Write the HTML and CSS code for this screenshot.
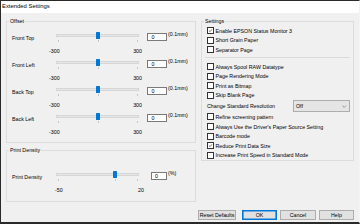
FILE: index.html
```html
<!DOCTYPE html>
<html>
<head>
<meta charset="utf-8">
<link rel="stylesheet" href="styles.css">
</head>
<body>
<div class="window">
  <div class="titlebar">Extended Settings</div>
  <div class="main">
    <div class="leftcol">
      <div class="group offset">
        <span class="legend">Offset</span>
        <div class="srow">
          <div class="lbl">Front Top</div>
          <div class="slider">
            <div class="track"></div>
            <div class="thumb" style="left:39.5px"></div>
            <div class="ticks"><i class="tk start"></i><i class="tk" style="left:41.5px"></i><i class="tk end"></i></div>
            <div class="scale wide"><span>-300</span><span>300</span></div>
          </div>
          <div class="num">0</div>
          <div class="unit">(0.1mm)</div>
        </div>
        <div class="srow">
          <div class="lbl">Front Left</div>
          <div class="slider">
            <div class="track"></div>
            <div class="thumb" style="left:39.5px"></div>
            <div class="ticks"><i class="tk start"></i><i class="tk" style="left:41.5px"></i><i class="tk end"></i></div>
            <div class="scale wide"><span>-300</span><span>300</span></div>
          </div>
          <div class="num">0</div>
          <div class="unit">(0.1mm)</div>
        </div>
        <div class="srow">
          <div class="lbl">Back Top</div>
          <div class="slider">
            <div class="track"></div>
            <div class="thumb" style="left:39.5px"></div>
            <div class="ticks"><i class="tk start"></i><i class="tk" style="left:41.5px"></i><i class="tk end"></i></div>
            <div class="scale wide"><span>-300</span><span>300</span></div>
          </div>
          <div class="num">0</div>
          <div class="unit">(0.1mm)</div>
        </div>
        <div class="srow">
          <div class="lbl">Back Left</div>
          <div class="slider">
            <div class="track"></div>
            <div class="thumb" style="left:39.5px"></div>
            <div class="ticks"><i class="tk start"></i><i class="tk" style="left:41.5px"></i><i class="tk end"></i></div>
            <div class="scale wide"><span>-300</span><span>300</span></div>
          </div>
          <div class="num">0</div>
          <div class="unit">(0.1mm)</div>
        </div>
      </div>
      <div class="group density">
        <span class="legend">Print Density</span>
        <div class="srow">
          <div class="lbl">Print Density</div>
          <div class="slider">
            <div class="track"></div>
            <div class="thumb" style="left:57.3px"></div>
            <div class="ticks"><i class="tk start"></i><i class="tk" style="left:59.3px"></i><i class="tk end"></i></div>
            <div class="scale narrow"><span>-50</span><span>20</span></div>
          </div>
          <div class="num small">0</div>
          <div class="unit">(%)</div>
        </div>
      </div>
    </div>
    <div class="group settings">
      <span class="legend">Settings</span>
      <div class="chk"><span class="box on"><svg viewBox="0 0 7 7"><path d="M1.3 3.6 L2.9 5.1 L5.7 1.8"/></svg></span>Enable EPSON Status Monitor 3</div>
      <div class="chk"><span class="box"></span>Short Grain Paper</div>
      <div class="chk"><span class="box"></span>Separator Page</div>
      <div class="sep"></div>
      <div class="chk"><span class="box"></span>Always Spool RAW Datatype</div>
      <div class="chk"><span class="box"></span>Page Rendering Mode</div>
      <div class="chk"><span class="box"></span>Print as Bitmap</div>
      <div class="chk"><span class="box"></span>Skip Blank Page</div>
      <div class="selrow">
        <span class="sellbl">Change Standard Resolution</span>
        <div class="select"><span>Off</span><svg viewBox="0 0 5 3"><path d="M0.5 0.5 L2.5 2.5 L4.5 0.5"/></svg></div>
      </div>
      <div class="chk"><span class="box"></span>Refine screening pattern</div>
      <div class="chk"><span class="box"></span>Always Use the Driver's Paper Source Setting</div>
      <div class="chk"><span class="box"></span>Barcode mode</div>
      <div class="chk"><span class="box on"><svg viewBox="0 0 7 7"><path d="M1.3 3.6 L2.9 5.1 L5.7 1.8"/></svg></span>Reduce Print Data Size</div>
      <div class="chk"><span class="box"></span>Increase Print Speed in Standard Mode</div>
    </div>
  </div>
  <div class="buttons">
    <div class="btn reset">Reset Defaults</div>
    <div class="btn ok">OK</div>
    <div class="btn cancel">Cancel</div>
    <div class="btn">Help</div>
  </div>
</div>
</body>
</html>
```

FILE: styles.css
```css
* { box-sizing: border-box; }
body {
  margin: 0;
  background: #ffffff;
  font-family: "Liberation Sans", Arial, sans-serif;
  font-size: 5.3px;
  color: #000;
}
.window {
  width: 360px;
  height: 224px;
  border-top: 1px solid #2a2a2a;
  border-left: 1px solid #2a2a2a;
  border-bottom: 2px solid #2a2a2a;
  border-right: 1px solid #f4f4f4;
  background: #f0f0f0;
  display: flex;
  flex-direction: column;
}
.titlebar {
  height: 12px;
  background: #fff;
  font-size: 5.9px;
  line-height: 11px;
  padding-left: 1px;
  flex: none;
}
.main {
  display: flex;
  gap: 5px;
  padding: 8px 0 0 5px;
}
.leftcol {
  width: 190px;
  display: flex;
  flex-direction: column;
  gap: 7px;
}
.group {
  position: relative;
  border: 1px solid #dcdcdc;
}
.legend {
  position: absolute;
  top: -4px;
  left: 2px;
  padding: 0 1px;
  background: #f0f0f0;
  line-height: 6px;
}
.offset { height: 122px; padding: 8px 0 0 5px; }
.density { height: 52px; padding: 18px 0 0 5px; }
.settings { width: 153px; height: 140px; padding: 4px 0 0 5px; }

.srow {
  display: flex;
  align-items: flex-start;
  height: 27px;
}
.lbl {
  width: 44px;
  padding-top: 4.7px;
  line-height: 6px;
  white-space: nowrap;
}
.slider {
  position: relative;
  width: 84px;
  height: 27px;
}
.track {
  margin-top: 3.5px;
  width: 83px;
  height: 3px;
  background: #e7e7e7;
  border: 1px solid #d6d6d6;
}
.thumb {
  position: absolute;
  top: 1.5px;
  width: 4px;
  height: 7px;
  background: #0078d7;
  border-radius: 0.5px;
}
.ticks {
  position: relative;
  margin-top: 3.5px;
  height: 2px;
}
.tk {
  position: absolute;
  top: 0;
  width: 1px;
  height: 2px;
  background: #c6c6c6;
}
.tk.start { left: 2px; }
.tk.end { left: 81px; }
.scale {
  display: flex;
  justify-content: space-between;
  margin-top: 5.7px;
  line-height: 6px;
}
.scale.wide { margin-left: -7px; margin-right: -2px; }
.scale.narrow { margin-left: -1px; margin-right: -4px; }
.num {
  margin-left: 7px;
  margin-top: 2.5px;
  width: 20px;
  height: 8.5px;
  background: #fff;
  border: 1px solid #7a7a7a;
  line-height: 6.5px;
  padding-left: 3.5px;
}
.num.small {
  margin-left: 10.5px;
  width: 16.5px;
}
.unit {
  margin-left: 1px;
  margin-top: 1.2px;
  line-height: 6px;
  white-space: nowrap;
}

.chk {
  display: flex;
  align-items: center;
  height: 9.6px;
  white-space: nowrap;
}
.box {
  width: 7px;
  height: 7px;
  border: 1px solid #333;
  background: #fff;
  margin-right: 1.5px;
  flex: none;
  display: flex;
}
.box svg { width: 5px; height: 5px; }
.box svg path { fill: none; stroke: #333; stroke-width: 0.9; }
.sep {
  height: 1px;
  background: #dadada;
  margin: 2.5px 3px 3.5px -2px;
}
.selrow {
  display: flex;
  align-items: center;
  height: 12px;
  white-space: nowrap;
}
.sellbl { flex: 1; }
.select {
  width: 57px;
  height: 12.5px;
  margin-right: 3px;
  background: #e5e5e5;
  border: 1px solid #adadad;
  display: flex;
  align-items: center;
  justify-content: space-between;
  padding: 0 2.5px 0 2px;
}
.select svg { width: 4.5px; height: 3px; }
.select svg path { fill: none; stroke: #555; stroke-width: 0.6; }

.buttons {
  margin-top: auto;
  margin-bottom: 2px;
  display: flex;
  justify-content: flex-end;
  padding-right: 5px;
}
.btn {
  width: 35px;
  height: 10px;
  margin-left: 3px;
  background: #e1e1e1;
  border: 1px solid #adadad;
  display: flex;
  align-items: center;
  justify-content: center;
  white-space: nowrap;
  line-height: 6px;
}
.btn.reset { width: 38px; margin-right: 3px; }
.btn.cancel { width: 36px; }
.btn.ok {
  border-color: #0078d7;
  box-shadow: inset 0 0 0 0.6px #0078d7;
}
```
